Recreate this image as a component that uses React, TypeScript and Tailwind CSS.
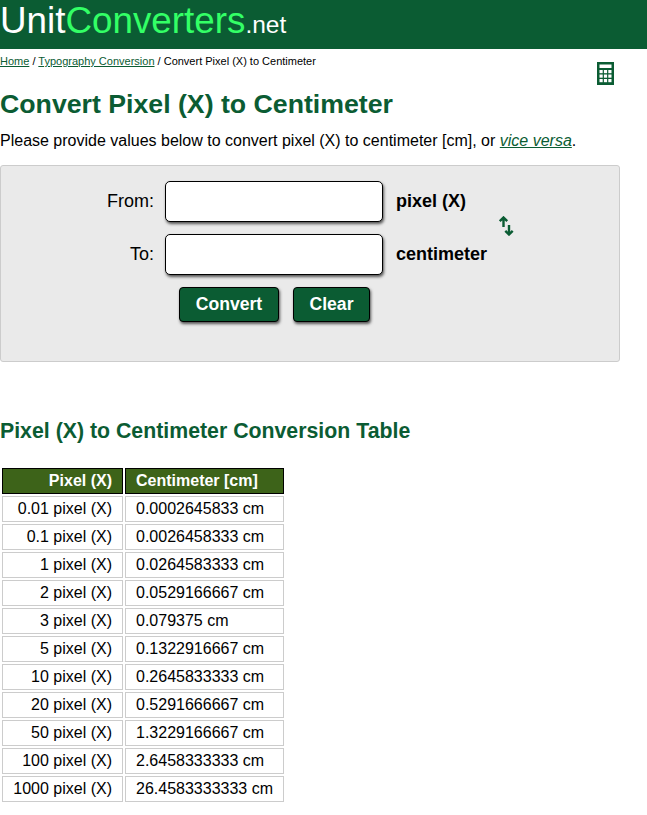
const rows = [
  ['0.01 pixel (X)', '0.0002645833 cm'],
  ['0.1 pixel (X)', '0.0026458333 cm'],
  ['1 pixel (X)', '0.0264583333 cm'],
  ['2 pixel (X)', '0.0529166667 cm'],
  ['3 pixel (X)', '0.079375 cm'],
  ['5 pixel (X)', '0.1322916667 cm'],
  ['10 pixel (X)', '0.2645833333 cm'],
  ['20 pixel (X)', '0.5291666667 cm'],
  ['50 pixel (X)', '1.3229166667 cm'],
  ['100 pixel (X)', '2.6458333333 cm'],
  ['1000 pixel (X)', '26.4583333333 cm'],
];

function CalcIcon() {
  return (
    <svg width="17" height="23" viewBox="0 0 17 23" className="block">
      <rect width="17" height="23" fill="#0b5c33" />
      <rect x="2.5" y="2.5" width="12" height="3.5" fill="#fff" />
      <g fill="#fff">
        <rect x="2.5" y="8" width="3.2" height="3.2" />
        <rect x="6.9" y="8" width="3.2" height="3.2" />
        <rect x="11.3" y="8" width="3.2" height="3.2" />
        <rect x="2.5" y="12.5" width="3.2" height="3.2" />
        <rect x="6.9" y="12.5" width="3.2" height="3.2" />
        <rect x="11.3" y="12.5" width="3.2" height="3.2" />
        <rect x="2.5" y="17" width="3.2" height="3.2" />
        <rect x="6.9" y="17" width="3.2" height="3.2" />
        <rect x="11.3" y="17" width="3.2" height="3.2" />
      </g>
    </svg>
  );
}

function SwapIcon() {
  return (
    <svg width="15" height="20" viewBox="0 0 15 20" className="block" fill="none" stroke="#0b5c33" strokeWidth="2.4">
      <path d="M4.5 11V1.5M0.8 5.2L4.5 1.5 8.2 5.2" />
      <path d="M10 9v9.5M6.3 14.8l3.7 3.7 3.7-3.7" />
    </svg>
  );
}

export default function App() {
  return (
    <div className="min-h-[815px] bg-white text-black font-['Liberation_Sans',Arial,sans-serif]">
      <div className="h-[49px] overflow-hidden bg-[#0b5c33] text-[36.8px] leading-[42px] text-white">
        Unit<span className="text-[#33ff66]">Converters</span>
        <span className="text-[24.5px]">.net</span>
      </div>

      <div className="flex items-start justify-between pr-[33px] pt-[5px]">
        <div className="text-[11px] leading-[14px]">
          <a href="#" className="text-[#0b5c33] underline">Home</a> /{' '}
          <a href="#" className="text-[#0b5c33] underline">Typography Conversion</a> / Convert Pixel (X) to Centimeter
        </div>
        <div className="pt-[8px]">
          <CalcIcon />
        </div>
      </div>

      <h1 className="mt-[3px] text-[26.7px] font-bold leading-[32px] text-[#0b5c33]">Convert Pixel (X) to Centimeter</h1>

      <p className="mt-[11px] text-[16px] leading-[20px]">
        Please provide values below to convert pixel (X) to centimeter [cm], or{' '}
        <a href="#" className="italic text-[#0b5c33] underline">vice versa</a>.
      </p>

      <div className="mt-[14px] h-[197px] w-[620px] rounded-[3px] border border-[#cccccc] bg-[#eaeaea] pt-[15px]">
        <div className="flex">
          <div className="flex flex-col gap-[12px]">
            <div className="flex items-center">
              <label className="w-[164px] pr-[11px] text-right text-[18px]">From:</label>
              <input className="h-[41px] w-[218px] rounded-[5px] border border-black bg-white shadow-[1px_2px_3px_#555]" />
              <span className="ml-[13px] text-[18px] font-bold">pixel (X)</span>
            </div>
            <div className="flex items-center">
              <label className="w-[164px] pr-[11px] text-right text-[18px]">To:</label>
              <input className="h-[41px] w-[218px] rounded-[5px] border border-black bg-white shadow-[1px_2px_3px_#555]" />
              <span className="ml-[13px] text-[18px] font-bold">centimeter</span>
            </div>
          </div>
          <div className="ml-[12px] mt-[35px]">
            <SwapIcon />
          </div>
        </div>
        <div className="ml-[178px] mt-[12px] flex gap-[14px]">
          <button className="h-[35px] w-[100px] rounded-[4px] border border-black bg-[#0b5c33] text-[17.6px] font-bold text-white shadow-[1px_2px_3px_#555]">Convert</button>
          <button className="h-[35px] w-[77px] rounded-[4px] border border-black bg-[#0b5c33] text-[17.6px] font-bold text-white shadow-[1px_2px_3px_#555]">Clear</button>
        </div>
      </div>

      <h2 className="mt-[55px] text-[21.3px] font-bold leading-[28px] text-[#0b5c33]">Pixel (X) to Centimeter Conversion Table</h2>

      <table className="mt-[21px] border-separate border-spacing-[2px] text-[16px]">
        <thead>
          <tr>
            <th className="h-[26px] w-[121px] border border-black bg-[#3d6319] px-[10px] text-right font-bold text-white">Pixel (X)</th>
            <th className="h-[26px] w-[159px] border border-black bg-[#3d6319] px-[10px] text-left font-bold text-white">Centimeter [cm]</th>
          </tr>
        </thead>
        <tbody>
          {rows.map((r) => (
            <tr key={r[0]}>
              <td className="h-[26px] border border-[#cccccc] px-[10px] text-right">{r[0]}</td>
              <td className="h-[26px] border border-[#cccccc] px-[10px] text-left">{r[1]}</td>
            </tr>
          ))}
        </tbody>
      </table>
    </div>
  );
}
